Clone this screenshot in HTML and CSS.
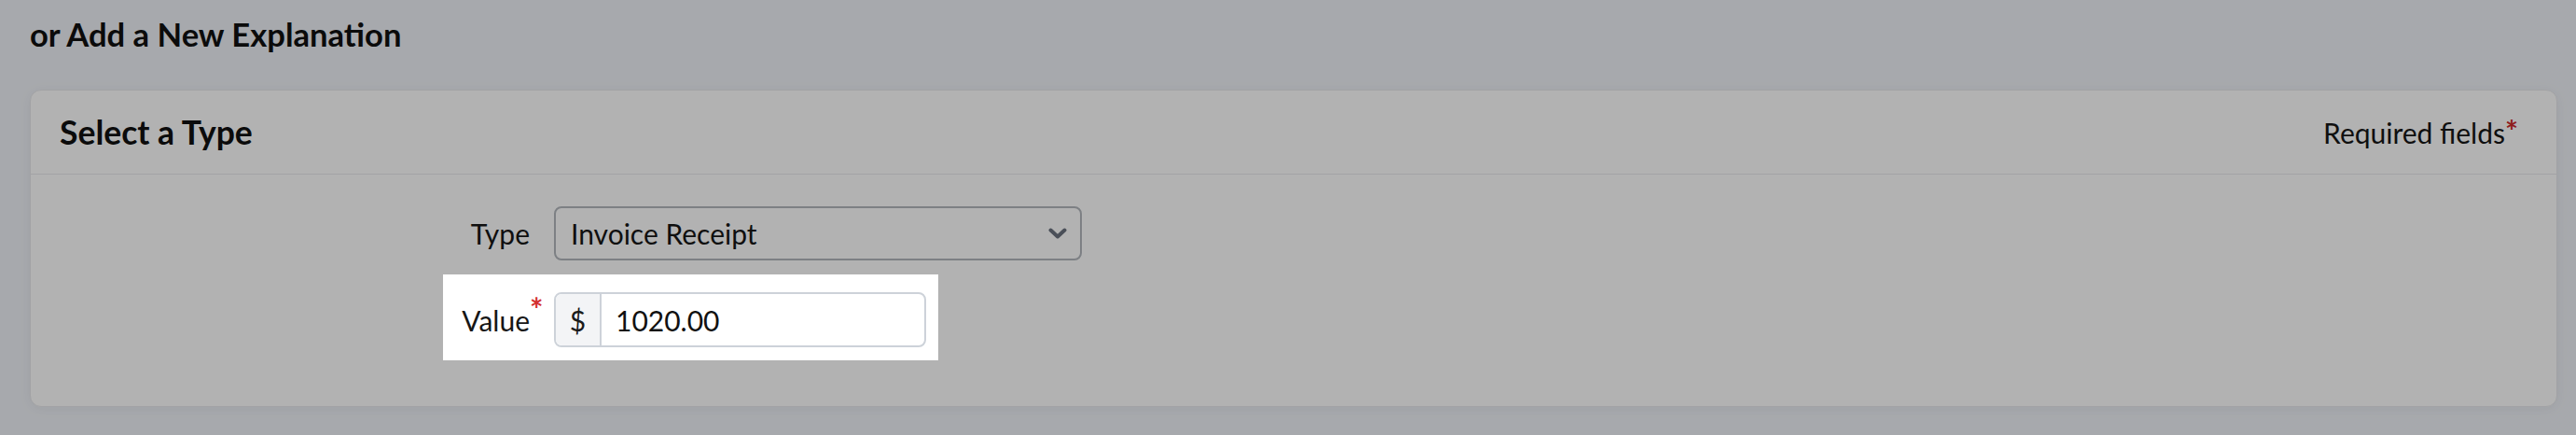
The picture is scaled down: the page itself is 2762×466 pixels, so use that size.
FILE: index.html
```html
<!DOCTYPE html>
<html lang="en">
<head>
<meta charset="utf-8">
<title>Add a New Explanation</title>
<link rel="stylesheet" href="styles.css">
</head>
<body>
<main class="page">
  <h2 class="page-title">or Add a New Explanation</h2>
  <section class="card">
    <header class="card-header">
      <h3 class="card-title">Select a Type</h3>
      <span class="required-note">Required fields<span class="req-star">*</span></span>
    </header>
    <div class="card-body">
      <div class="form-row">
        <label class="form-label">Type</label>
        <div class="select">
          <span class="select-value">Invoice Receipt</span>
          <svg class="chevron" width="20" height="12" viewBox="0 0 20 12" aria-hidden="true">
            <polyline points="2.5,2.5 10,9.5 17.5,2.5" fill="none" stroke="#6b727e" stroke-width="4" stroke-linecap="round" stroke-linejoin="round"/>
          </svg>
        </div>
      </div>
      <div class="form-row spotlight">
        <label class="form-label">Value<span class="label-star">*</span></label>
        <div class="input-group">
          <span class="addon">$</span>
          <input class="input" type="text" value="1020.00">
        </div>
      </div>
    </div>
  </section>
</main>
</body>
</html>
```
FILE: styles.css
```css
* { box-sizing: border-box; }
html, body { margin: 0; }
body {
  width: 2762px;
  height: 466px;
  overflow: hidden;
  background: #f0f3f8;
  font-family: Lato, "Noto Sans", sans-serif;
  color: #111;
}
.page {
  padding: 17px 20px 0 32px;
}
.page-title {
  margin: 0 0 39px;
  font-size: 34.6px;
  line-height: 40px;
  font-weight: 700;
}
.card {
  background: #fff;
  border: 1px solid #e8e9ec;
  border-radius: 12px;
  box-shadow: 0 2px 14px rgba(30, 40, 60, 0.06);
}
.card-header {
  height: 90px;
  border-bottom: 1px solid #e8e9ec;
  display: flex;
  align-items: center;
  justify-content: space-between;
  padding: 0 41px 0 31px;
}
.card-title {
  margin: 0;
  font-size: 35.5px;
  line-height: 40px;
  font-weight: 700;
}
.required-note {
  font-size: 30px;
  line-height: 36px;
  color: #161616;
}
.req-star {
  color: #cc2a2a;
  font-weight: 700;
  font-size: 33px;
  line-height: 0;
  position: relative;
  top: -1px;
}
.card-body {
  display: flex;
  flex-direction: column;
  align-items: flex-start;
  gap: 15px;
  padding: 34px 0 49px 442px;
}
.form-row {
  display: flex;
  align-items: center;
  gap: 26px;
}
.form-label {
  position: relative;
  width: 93px;
  text-align: right;
  font-size: 30px;
  line-height: 36px;
  color: #161616;
}
.label-star {
  position: absolute;
  left: 100%;
  top: -12px;
  font-size: 34px;
  line-height: 36px;
  font-weight: 700;
  color: #d32f2f;
}
.select {
  width: 566px;
  height: 58px;
  border: 2px solid #b3b8be;
  border-radius: 8px;
  display: flex;
  align-items: center;
  justify-content: space-between;
  padding: 0 14px 0 16px;
  font-size: 30px;
  color: #161616;
}
.chevron { display: block; }
.spotlight {
  position: relative;
  z-index: 10;
  background: #fff;
  padding: 19px 13px 14px 0;
  box-shadow: 0 0 0 4000px rgba(0, 0, 0, 0.3);
}
.input-group {
  width: 399px;
  height: 59px;
  border: 2px solid #cdd2d9;
  border-radius: 8px;
  display: flex;
  overflow: hidden;
  background: #fff;
}
.addon {
  width: 49px;
  flex: none;
  display: flex;
  align-items: center;
  justify-content: center;
  background: #f3f4f6;
  border-right: 2px solid #cdd2d9;
  font-size: 30px;
  color: #1a1a1a;
}
.input {
  flex: 1;
  min-width: 0;
  border: 0;
  outline: none;
  background: transparent;
  padding: 0 0 0 15px;
  font-family: Lato, "Noto Sans", sans-serif;
  font-size: 30px;
  color: #111;
}
```
